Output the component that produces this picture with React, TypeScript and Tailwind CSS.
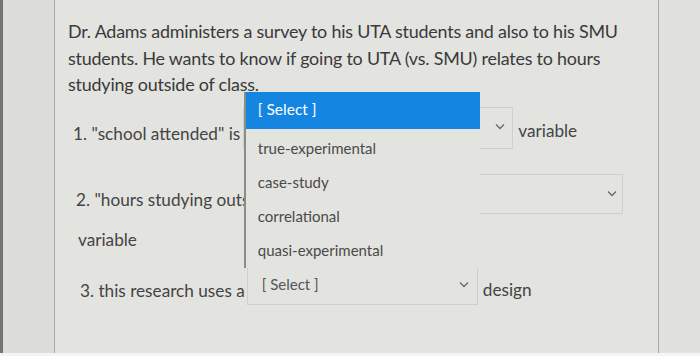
import React from "react";

const Chevron = () => (
  <svg width="10" height="7" viewBox="0 0 10 7" className="shrink-0">
    <polyline points="1,1.5 5,5.5 9,1.5" fill="none" stroke="#6b6b6b" strokeWidth="1.4" />
  </svg>
);

const options = ["true-experimental", "case-study", "correlational", "quasi-experimental"];

export default function App() {
  return (
    <div
      className="w-[700px] h-[356px] flex flex-col bg-[#e3e3e0] overflow-hidden text-[#444]"
      style={{ fontFamily: "Lato, 'Open Sans', sans-serif" }}
    >
      <div className="flex flex-1">
        {/* left gutter */}
        <div className="w-[55px] shrink-0 flex border-r border-[#a9a9a5] bg-[#dcdcd8]">
          <div className="w-[3px] bg-[#75756f]" />
        </div>

        {/* question body */}
        <div className="w-[604px] shrink-0 border-r border-[#a9a9a5] pl-[13px] pt-[18px]">
          <p className="text-[17.9px] leading-[26.5px] text-[#3a3a3a] tracking-[-0.2px]">
            Dr. Adams administers a survey to his UTA students and also to his SMU
            <br />
            students. He wants to know if going to UTA (vs. SMU) relates to hours
            <br />
            studying outside of class.
          </p>

          {/* row 1 */}
          <div className="flex items-center mt-[9px] pl-[5px] text-[17.2px]">
            <span className="whitespace-nowrap mt-[12px]">1. "school attended" is</span>
            <div className="ml-[3px] w-[270px] h-[42px] border border-[#cfcfcb] flex items-center justify-end pr-[7px] pb-[3px]">
              <Chevron />
            </div>
            <span className="ml-[5px] mt-[6px]">variable</span>
          </div>

          {/* row 2 */}
          <div className="flex items-center mt-[25px] pl-[8px] text-[17.2px]">
            <span className="whitespace-nowrap mt-[12px]">2. "hours studying outside of class" is</span>
            <div className="ml-[6px] w-[263px] h-[40px] border border-[#cfcfcb] flex items-center justify-end pr-[5px]">
              <Chevron />
            </div>
          </div>
          <div className="mt-[12px] pl-[10px] text-[17.2px] leading-[27px]">variable</div>

          {/* row 3 */}
          <div className="flex items-center mt-[14px] pl-[12px] text-[17.2px]">
            <span className="whitespace-nowrap mt-[10px]">3. this research uses a</span>
            <div className="relative ml-[2px] w-[231px] h-[38px] border border-[#cfcfcb] flex items-center justify-between pl-[14px] pr-[8px] pb-[3px]">
              <span className="text-[15px] text-[#555]">[ Select ]</span>
              <Chevron />

              {/* open dropdown */}
              <div className="absolute left-[-4px] bottom-full w-[236px] pb-[3px] bg-[#e3e3e0] border-l-2 border-[#8d8d88]">
                <div className="h-[37px] bg-[#1486e2] flex items-center pl-[12px] text-white text-[15.5px]">
                  [ Select ]
                </div>
                {options.map((o) => (
                  <div key={o} className="h-[34px] flex items-center pl-[12px] pt-[6px] text-[15px] text-[#4a4a4a]">
                    {o}
                  </div>
                ))}
              </div>
            </div>
            <span className="ml-[5px] mt-[8px]">design</span>
          </div>
        </div>

        <div className="flex-1 bg-[#e1e1de]" />
      </div>
      <div className="h-[3px] bg-[#f4f4f2]" />
    </div>
  );
}
